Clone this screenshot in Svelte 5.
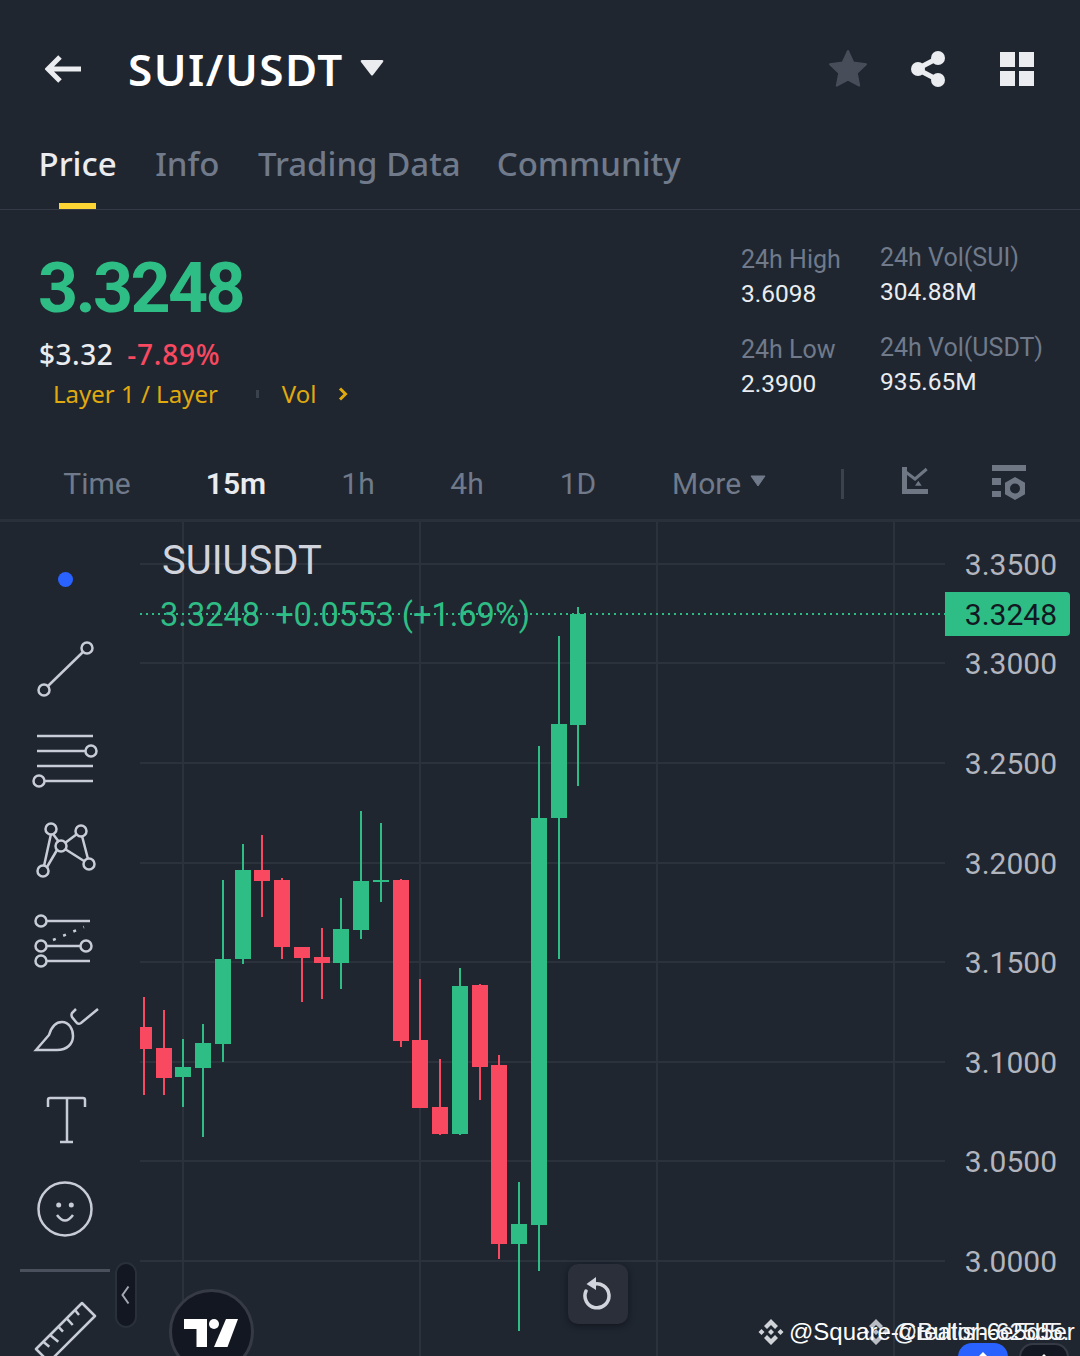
<script>
  const tabs = ['Price', 'Info', 'Trading Data', 'Community'];
  const intervals = [
    { label: 'Time', w: 114 },
    { label: '15m', w: 164, active: true },
    { label: '1h', w: 80 },
    { label: '4h', w: 138 },
    { label: '1D', w: 84 }
  ];
  const stats = [
    [['24h High', '3.6098'], ['24h Low', '2.3900']],
    [['24h Vol(SUI)', '304.88M'], ['24h Vol(USDT)', '935.65M']]
  ];

  // price axis, y in page pixels
  const levels = [
    ['3.3500', 564], ['3.3000', 663], ['3.2500', 763], ['3.2000', 863],
    ['3.1500', 962], ['3.1000', 1062], ['3.0500', 1161], ['3.0000', 1261]
  ];
  const verticals = [183, 420, 657, 894];

  // x, wick top, wick bottom, body top, body bottom
  const candles = [
    [144, 997, 1095, 1027, 1049, 'd'], [164, 1010, 1095, 1048, 1078, 'd'],
    [183, 1039, 1107, 1067, 1077, 'u'], [203, 1024, 1137, 1043, 1068, 'u'],
    [223, 880, 1062, 959, 1044, 'u'], [243, 844, 964, 870, 959, 'u'],
    [262, 835, 917, 870, 881, 'd'], [282, 878, 959, 880, 947, 'd'],
    [302, 947, 1002, 947, 958, 'd'], [322, 928, 999, 957, 963, 'd'],
    [341, 898, 989, 929, 963, 'u'], [361, 811, 939, 881, 930, 'u'],
    [381, 823, 902, 880, 882, 'u'], [401, 879, 1047, 880, 1041, 'd'],
    [420, 979, 1108, 1040, 1108, 'd'], [440, 1059, 1135, 1107, 1134, 'd'],
    [460, 968, 1135, 986, 1134, 'u'], [480, 984, 1100, 985, 1067, 'd'],
    [499, 1055, 1259, 1065, 1244, 'd'], [519, 1182, 1331, 1224, 1244, 'u'],
    [539, 746, 1271, 818, 1225, 'u'], [559, 636, 959, 724, 818, 'u'],
    [578, 607, 786, 614, 725, 'u']
  ];

  const diamond = 'M14 1l7 7-3 3-4-4-4 4-3-3zM14 27l7-7-3-3-4 4-4-4-3 3zM1.500 14l3-3 3 3-3 3zM26.500 14l-3-3-3 3 3 3zM14 11l3 3-3 3-3-3z';
</script>

<div class="screen">
  <header class="top">
    <svg class="back" viewBox="0 0 36 28" width="36" height="28">
      <path d="M36 14H4M15 2 3 14l12 12" fill="none" stroke="#eaecef" stroke-width="5" />
    </svg>
    <h1>SUI/USDT</h1>
    <svg class="caret" viewBox="0 0 24 18" width="24" height="18">
      <path d="M2 1h20q2 0 1 2L13 16q-1 1-2 0L1 3Q0 1 2 1z" fill="#eaecef" />
    </svg>
    <div class="actions">
      <svg viewBox="0 0 40 40" width="40" height="40">
        <path d="M20 2l5.4 11.6 12.6 1.7-9.2 8.8 2.4 12.5L20 30.5 8.800 36.600l2.400-12.500L2 15.300l12.600-1.700z" fill="#474e5a" stroke="#474e5a" stroke-width="2" stroke-linejoin="round" />
      </svg>
      <svg viewBox="0 0 36 36" width="36" height="36">
        <path d="M27 7 6 18l21 11" fill="none" stroke="#eaecef" stroke-width="5" />
        <circle cx="27" cy="7" r="7" fill="#eaecef" />
        <circle cx="27" cy="29" r="7" fill="#eaecef" />
        <circle cx="7" cy="18" r="7" fill="#eaecef" />
      </svg>
      <div class="squares"><i></i><i></i><i></i><i></i></div>
    </div>
  </header>

  <nav class="tabs">
    {#each tabs as tab, i}
      <span class="tab" class:on={i === 0}>{tab}</span>
    {/each}
  </nav>

  <section class="stats">
    <div class="ticker">
      <div class="last">3.3248</div>
      <div class="change"><span>$3.32</span><span class="down">-7.89%</span></div>
      <div class="tags">
        <span>Layer 1 / Layer</span>
        <i class="tick"></i>
        <span>Vol</span>
        <svg viewBox="0 0 10 14" width="10" height="14">
          <path d="M2 1.500 7.500 7 2 12.500" fill="none" stroke="#e0aa0e" stroke-width="3" />
        </svg>
      </div>
    </div>
    <div class="figures">
      {#each stats as col, c}
        <div class="col" class:second={c === 1}>
          {#each col as [name, val]}
            <div class="fig"><span>{name}</span><b>{val}</b></div>
          {/each}
        </div>
      {/each}
    </div>
  </section>

  <div class="intervals">
    {#each intervals as it}
      <span class="iv" class:on={it.active} style="width:{it.w}px">{it.label}</span>
    {/each}
    <span class="more">More</span>
    <svg class="more-caret" viewBox="0 0 16 12" width="16" height="12">
      <path d="M1 1h14L8 11z" fill="#707a8a" stroke="#707a8a" stroke-linejoin="round" />
    </svg>
    <i class="sep"></i>
    <svg class="ic1" viewBox="0 0 28 28" width="28" height="28">
      <path d="M3.500 1V25.500H27" fill="none" stroke="#6f7785" stroke-width="5" />
      <path d="M5 6.300 14 13 25.700 3" fill="none" stroke="#6f7785" stroke-width="3" />
      <path d="M14 19.700H20.700L17.300 14.700z" fill="#6f7785" />
    </svg>
    <svg class="ic2" viewBox="0 0 36 36" width="36" height="36">
      <path d="M1 0H35V6H1zM1 13H10V20H1zM1 26H10V32H1z" fill="#6f7785" />
      <path fill-rule="evenodd" d="M24 12 34 17.750V29.250L24 35 14 29.250V17.750zM24 18.500a5 5 0 1 0 0 10 5 5 0 0 0 0-10z" fill="#6f7785" />
    </svg>
  </div>

  <section class="chart">
    <aside class="tools">
      <div class="tool"><i class="dot"></i></div>
      <div class="tool">
        <svg viewBox="0 0 70 70" width="70" height="70">
          <path d="M18 52 53 18" /><circle cx="14" cy="56" r="5.500" /><circle cx="57" cy="14" r="5.500" />
        </svg>
      </div>
      <div class="tool">
        <svg viewBox="0 0 70 70" width="70" height="70">
          <path d="M7 12H63M7 27H55M7 42H63M15 57H63" /><circle cx="61" cy="27" r="5.500" /><circle cx="9" cy="57" r="5.500" />
        </svg>
      </div>
      <div class="tool">
        <svg viewBox="0 0 70 70" width="70" height="70">
          <path d="M21 20 14 52M23 20 29 28M35 29 47 20M52 22 58 45M35 35 54 47M27 36 17 53" />
          <circle cx="21" cy="15" r="5.500" /><circle cx="51" cy="17" r="5.500" /><circle cx="31" cy="32" r="5.500" />
          <circle cx="13" cy="57" r="5.500" /><circle cx="59" cy="50" r="5.500" />
        </svg>
      </div>
      <div class="tool">
        <svg viewBox="0 0 70 70" width="70" height="70">
          <path d="M17 17H60M17 42H50M17 57H60" />
          <path d="M23 36 54 23" stroke-dasharray="3 8" />
          <circle cx="11" cy="17" r="5.500" /><circle cx="11" cy="42" r="5.500" /><circle cx="56" cy="42" r="5.500" /><circle cx="11" cy="57" r="5.500" />
        </svg>
      </div>
      <div class="tool">
        <svg viewBox="0 0 70 70" width="70" height="70">
          <path d="M6 56 19 41C22 31 27 28 32 28 39 28 43 35 43 42 43 50 37 56 27 56Z" />
          <path d="M46 15 42 19Q41 21 42 23L46 28Q48 31 51 29L68 15" />
        </svg>
      </div>
      <div class="tool">
        <svg viewBox="0 0 70 70" width="70" height="70">
          <path d="M18 23V16Q18 14 20 14H53Q55 14 55 16V23M37 14V58M30 58H43" />
        </svg>
      </div>
      <div class="tool">
        <svg viewBox="0 0 70 70" width="70" height="70">
          <circle cx="35" cy="35" r="26.500" />
          <circle class="solid" cx="28.700" cy="31" r="2.500" /><circle class="solid" cx="41.300" cy="31" r="2.500" />
          <path d="M27 41Q35 52 43 41" />
        </svg>
      </div>
      <hr />
      <div class="ruler">
        <svg viewBox="0 0 70 70" width="70" height="70">
          <path d="M52 3 65 16 19 62 6 49Z" stroke-linejoin="round" />
          <path d="M45 10 49 15M36.700 18.300 42.700 25M28.300 26.700 33 31.700M20 35 28.300 41.700M13.300 41.700 19.300 46.700" />
        </svg>
      </div>
    </aside>

    <svg class="plot" viewBox="140 522 940 834" width="940" height="834">
      {#each levels as [, y]}
        <line x1="140" x2="945" y1={y} y2={y} stroke="#2b323c" stroke-width="2" />
      {/each}
      {#each verticals as x}
        <line x1={x} x2={x} y1="522" y2="1356" stroke="#2b323c" stroke-width="2" />
      {/each}

      {#each candles as [x, hi, lo, top, bottom, dir]}
        <g fill={dir === 'u' ? '#2ebd85' : '#f84960'}>
          <rect x={x - 1} y={hi} width="2" height={lo - hi} />
          <rect x={x - 8} y={top} width="16" height={bottom - top} />
        </g>
      {/each}

      <line x1="140" x2="945" y1="614" y2="614" stroke="#2ebd85" stroke-width="2" stroke-dasharray="2 4" />

      {#each levels as [label, y]}
        <text x="1057" y={y + 11} text-anchor="end" class="axis">{label}</text>
      {/each}
      <path d="M945 592H1066a4 4 0 0 1 4 4V632a4 4 0 0 1-4 4H945Z" fill="#2ebd85" />
      <text x="1057" y="625" text-anchor="end" class="axis tag">3.3248</text>
    </svg>

    <div class="legend">
      <div class="sym">SUIUSDT</div>
      <div class="quote"><span>3.3248</span><span>+0.0553</span><span>(+1.69%)</span></div>
    </div>

    <div class="collapse">
      <svg viewBox="0 0 10 20" width="10" height="20">
        <path d="M7.500 1.500 1.500 10l6 8.500" fill="none" stroke="#a3a8b3" stroke-width="2" />
      </svg>
    </div>

    <div class="tv">
      <svg viewBox="0 0 56 30" width="56" height="30">
        <path d="M0 0H23V28H12.500V10H0Z" fill="#fff" />
        <circle cx="30" cy="5" r="5" fill="#fff" />
        <path d="M42 0H54L43.500 28H30Z" fill="#fff" />
      </svg>
    </div>

    <button class="reset" aria-label="Reset chart">
      <svg viewBox="0 0 32 36" width="32" height="36">
        <path d="M11 8.500a12 12 0 1 1-7 6.500" fill="none" stroke="#d1d4dc" stroke-width="3.500" stroke-linecap="round" />
        <path d="M14 1 4.500 8 14 14z" fill="#d1d4dc" />
      </svg>
    </button>

    <div class="fab blue"><i></i></div>
    <div class="fab dark"><i></i></div>

    <svg class="logo one" viewBox="0 0 28 28" width="28" height="28"><path d={diamond} fill="#d0d3d8" /></svg>
    <svg class="logo two" viewBox="0 0 28 28" width="28" height="28"><path d={diamond} fill="#b9bcc2" /></svg>
    <span class="wm one">@Square-Creator-6e5d5er</span>
    <span class="wm two">@Bullish-625d5.</span>
  </section>
</div>

<style>
  :global(body) {
    background: #1f2630;
  }

  .screen {
    width: 1080px;
    height: 1356px;
    overflow: hidden;
    background: #1f2630;
    color: #eaecef;
    font-family: "Noto Sans", Roboto, sans-serif;
  }

  .top {
    height: 138px;
    display: flex;
    align-items: center;
    padding-left: 45px;
  }
  .back {
    margin-right: 47px;
  }
  .top h1 {
    margin: 0;
    font-size: 44px;
    line-height: 50px;
    font-weight: 600;
    letter-spacing: 1.500px;
    color: #fff;
  }
  .caret {
    margin: -2px 0 0 16px;
  }
  .actions {
    margin-left: auto;
    padding-right: 46px;
    display: flex;
    align-items: center;
    gap: 43px;
  }
  .squares {
    width: 34px;
    height: 34px;
    margin-left: 10px;
    display: grid;
    grid-template-columns: 15px 15px;
    grid-template-rows: 15px 15px;
    gap: 4px;
  }
  .squares i {
    background: #eaecef;
  }

  .tabs {
    height: 72px;
    box-sizing: border-box;
    padding-left: 38.500px;
    display: flex;
    gap: 38.500px;
    border-bottom: 1px solid #343b46;
  }
  .tab {
    position: relative;
    font-size: 33px;
    line-height: 52px;
    font-weight: 500;
    color: #707a8a;
  }
  .tab:last-child {
    margin-left: -2.500px;
  }
  .tab.on {
    color: #eaecef;
  }
  .tab.on::after {
    content: "";
    position: absolute;
    left: 20.500px;
    top: 65px;
    width: 37px;
    height: 6px;
    background: #fcd535;
  }

  .stats {
    height: 230px;
    display: flex;
    justify-content: space-between;
  }
  .ticker {
    padding: 38px 0 0 39px;
  }
  .last {
    margin-left: -1px;
    font-family: Roboto, sans-serif;
    font-size: 70px;
    line-height: 80px;
    font-weight: 700;
    letter-spacing: -2.700px;
    color: #2ebd85;
  }
  .change {
    margin-top: 8px;
    display: flex;
    gap: 14px;
    font-size: 28px;
    line-height: 36px;
    font-weight: 500;
    letter-spacing: 0.500px;
  }
  .down {
    color: #f84960;
    letter-spacing: 0.800px;
  }
  .tags {
    margin-top: 6px;
    padding-left: 14px;
    display: flex;
    align-items: center;
    font-size: 24px;
    line-height: 32px;
    color: #e0aa0e;
  }
  .tick {
    width: 3px;
    height: 8px;
    margin: 0 23px 0 38px;
    background: #3a424d;
  }
  .tags svg {
    margin-left: 22px;
  }

  .figures {
    display: flex;
    padding-right: 39px;
    font-family: Roboto, sans-serif;
  }
  .col {
    width: 139px;
    padding-top: 32px;
    display: flex;
    flex-direction: column;
    gap: 22px;
  }
  .col.second {
    width: 161px;
    padding-top: 30px;
  }
  .fig {
    display: flex;
    flex-direction: column;
    font-size: 25px;
    line-height: 35px;
    white-space: nowrap;
  }
  .fig span {
    color: #707a8a;
  }
  .fig b {
    font-size: 24.500px;
    line-height: 33px;
    font-weight: 400;
    color: #eaecef;
  }

  .intervals {
    height: 82px;
    box-sizing: border-box;
    padding: 8px 0 0 40px;
    display: flex;
    align-items: center;
    border-bottom: 3px solid #2a3039;
    font-family: Roboto, sans-serif;
    font-size: 30px;
    color: #707a8a;
  }
  .iv {
    text-align: center;
  }
  .iv.on {
    font-weight: 600;
    color: #eaecef;
  }
  .more {
    margin-left: 52px;
  }
  .more-caret {
    margin: -6px 0 0 9px;
  }
  .sep {
    width: 3px;
    height: 30px;
    margin-left: 75px;
    background: #3a424d;
  }
  .ic1 {
    margin: -8px 0 0 57px;
  }
  .ic2 {
    margin: -2px 0 0 62px;
  }

  .chart {
    position: relative;
    display: flex;
    height: 834px;
  }
  .tools {
    width: 140px;
    flex: none;
    padding-top: 12px;
    box-sizing: border-box;
  }
  .tool {
    width: 130px;
    height: 90px;
    display: flex;
    align-items: center;
    justify-content: center;
  }
  .tools svg {
    display: block;
    fill: none;
    stroke: #c8ccd6;
    stroke-width: 2.500;
  }
  .tools .solid {
    fill: #c8ccd6;
    stroke: none;
  }
  .dot {
    width: 15px;
    height: 15px;
    border-radius: 50%;
    background: #2962ff;
  }
  .tools hr {
    width: 90px;
    height: 3px;
    margin: 15px 0 0 20px;
    border: 0;
    background: #4a505c;
  }
  .ruler {
    padding: 28px 0 0 30px;
  }

  .plot {
    display: block;
    flex: none;
  }
  .axis {
    font-family: Roboto, sans-serif;
    font-size: 30px;
    fill: #b2b5be;
  }
  .axis.tag {
    fill: #131722;
  }

  .legend {
    position: absolute;
    left: 160px;
    top: 15px;
    font-family: Roboto, sans-serif;
    white-space: nowrap;
  }
  .sym {
    padding-left: 2px;
    font-size: 40px;
    line-height: 48px;
    color: #d1d4dc;
  }
  .quote {
    margin-top: 10px;
    display: flex;
    gap: 15px;
    font-size: 32.600px;
    line-height: 40px;
    color: #2ebd85;
  }
  .quote span:last-child {
    margin-left: -7px;
  }

  .collapse {
    position: absolute;
    left: 115px;
    top: 740px;
    width: 22px;
    height: 66px;
    box-sizing: border-box;
    display: flex;
    align-items: center;
    justify-content: center;
    border: 2px solid #2a303a;
    border-radius: 11px;
    background: #131722;
  }

  .tv {
    position: absolute;
    left: 169px;
    top: 767px;
    width: 85px;
    height: 85px;
    box-sizing: border-box;
    padding-top: 27px;
    display: flex;
    justify-content: center;
    align-items: flex-start;
    border: 3px solid #363a45;
    border-radius: 50%;
    background: #131722;
  }

  .reset {
    position: absolute;
    left: 568px;
    top: 742px;
    width: 60px;
    height: 60px;
    padding: 0;
    display: flex;
    align-items: center;
    justify-content: center;
    border: 0;
    border-radius: 10px;
    background: #2a2f3a;
    box-shadow: 0 2px 6px rgba(10, 12, 18, 0.6);
  }

  .logo {
    position: absolute;
    top: 796px;
  }
  .logo.one {
    left: 757px;
  }
  .logo.two {
    left: 862px;
  }
  .wm {
    position: absolute;
    top: 795px;
    font-family: "Liberation Sans", sans-serif;
    font-size: 24px;
    line-height: 30px;
    color: #fff;
    white-space: nowrap;
  }
  .wm.one {
    left: 789px;
  }
  .wm.two {
    left: 893px;
    color: #f2f3f5;
  }

  .fab {
    position: absolute;
    top: 821px;
    width: 50px;
    height: 40px;
    box-sizing: border-box;
    border-radius: 14px;
    display: flex;
    justify-content: center;
    padding-top: 9px;
  }
  .fab i {
    width: 0;
    height: 0;
    border: 5px solid transparent;
    border-bottom-color: #fff;
    border-top: 0;
  }
  .fab.blue {
    left: 958px;
    background: #2962ff;
  }
  .fab.dark {
    left: 1019px;
    background: #131722;
    border: 2px solid #363a45;
  }
</style>
